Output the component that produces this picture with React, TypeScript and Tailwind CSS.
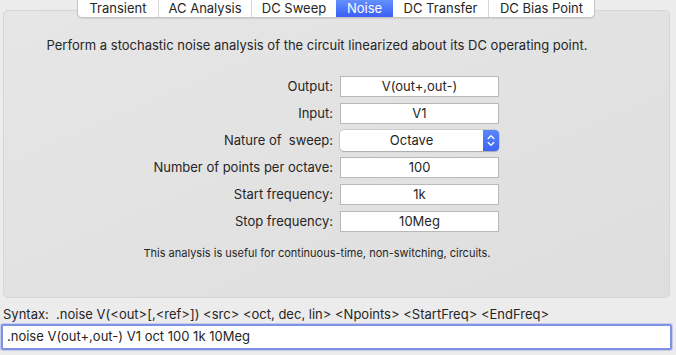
import React from 'react';

const tabs = [
  { label: 'Transient', w: 'w-[80px]' },
  { label: 'AC Analysis', w: 'w-[93px]' },
  { label: 'DC Sweep', w: 'w-[85px]' },
  { label: 'Noise', w: 'w-[57px]', active: true },
  { label: 'DC Transfer', w: 'w-[95px]' },
  { label: 'DC Bias Point', w: 'w-[106px]' },
];

const fields = [
  { label: 'Output:', value: 'V(out+,out-)' },
  { label: 'Input:', value: 'V1' },
  { label: 'Nature of  sweep:', value: 'Octave', select: true },
  { label: 'Number of points per octave:', value: '100' },
  { label: 'Start frequency:', value: '1k' },
  { label: 'Stop frequency:', value: '10Meg' },
];

const Stepper: React.FC = () => (
  <div className="flex h-full w-[16px] items-center justify-center rounded-r-[4px] bg-gradient-to-b from-[#5b85fb] to-[#3e63f3]">
    <svg width="8" height="13" viewBox="0 0 8 13" fill="none" stroke="white" strokeWidth="1.4" strokeLinecap="round" strokeLinejoin="round">
      <path d="M1.2 4.5 L4 1.8 L6.8 4.5" />
      <path d="M1.2 8.5 L4 11.2 L6.8 8.5" />
    </svg>
  </div>
);

const App: React.FC = () => {
  return (
    <div className="h-[355px] w-[676px] overflow-hidden bg-[#ececec] text-[#262626] font-['Inter','Liberation_Sans',Arial,sans-serif]">
      {/* segmented tab bar, overlaps panel top */}
      <div className="relative z-10 flex h-[18px] justify-center pr-[4px]">
        <div className="flex h-[18px] overflow-hidden rounded-b-[5px] border border-t-0 border-[#c4c4c4] bg-white shadow-[0_1px_1px_rgba(0,0,0,0.08)]">
          {tabs.map((t, i) => (
            <div
              key={t.label}
              className={`${t.w} flex items-center justify-center text-[13px] leading-none ${
                t.active
                  ? 'bg-gradient-to-b from-[#6590ff] to-[#3b5ef4] text-white'
                  : i > 0 && !tabs[i - 1].active
                  ? 'border-l border-[#d6d6d6]'
                  : ''
              }`}
            >
              {t.label}
            </div>
          ))}
        </div>
      </div>

      <div className="-mt-[8px] ml-[3px] h-[288px] w-[667px] rounded-[5px] border border-[#d6d6d6] bg-gradient-to-br from-[#e6e6e6] to-[#dedede]">
        <div className="w-[626px] pt-[26px]">
          <p className="text-center text-[13px] leading-[16px]">
            Perform a stochastic noise analysis of the circuit linearized about its DC operating point.
          </p>

          <div className="mt-[23px] flex flex-col gap-[6px]">
            {fields.map((f) => (
              <div key={f.label} className="flex h-[21px] items-center">
                <div className="w-[329px] whitespace-pre text-right text-[13px]">{f.label}</div>
                {f.select ? (
                  <div className="ml-[7px] flex h-[21px] w-[159px] items-center rounded-[4px] bg-white shadow-[0_0_0_0.5px_rgba(0,0,0,0.2),0_1px_1px_rgba(0,0,0,0.15)]">
                    <div className="flex-1 text-center text-[13px]">{f.value}</div>
                    <Stepper />
                  </div>
                ) : (
                  <div className="ml-[7px] flex h-[21px] w-[159px] items-center justify-center border border-[#b8b8b8] bg-white text-[13px]">
                    {f.value}
                  </div>
                )}
              </div>
            ))}
          </div>

          <p className="mt-[14px] text-center text-[11px] leading-[14px]">
            This analysis is useful for continuous-time, non-switching, circuits.
          </p>
        </div>
      </div>

      <div className="mt-[8px] pl-[3px] text-[13px] leading-[16px]">
        Syntax:&nbsp; .noise V(&lt;out&gt;[,&lt;ref&gt;]) &lt;src&gt; &lt;oct, dec, lin&gt; &lt;Npoints&gt; &lt;StartFreq&gt; &lt;EndFreq&gt;
      </div>

      <div className="ml-[1px] mt-[2px] flex h-[26px] w-[671px] items-center rounded-[2px] border-2 border-[#8092e4] bg-white pl-[4px] text-[13px] shadow-[0_0_0_1px_rgba(128,146,228,0.35)]">
        .noise V(out+,out-) V1 oct 100 1k 10Meg
      </div>
    </div>
  );
};

export default App;
